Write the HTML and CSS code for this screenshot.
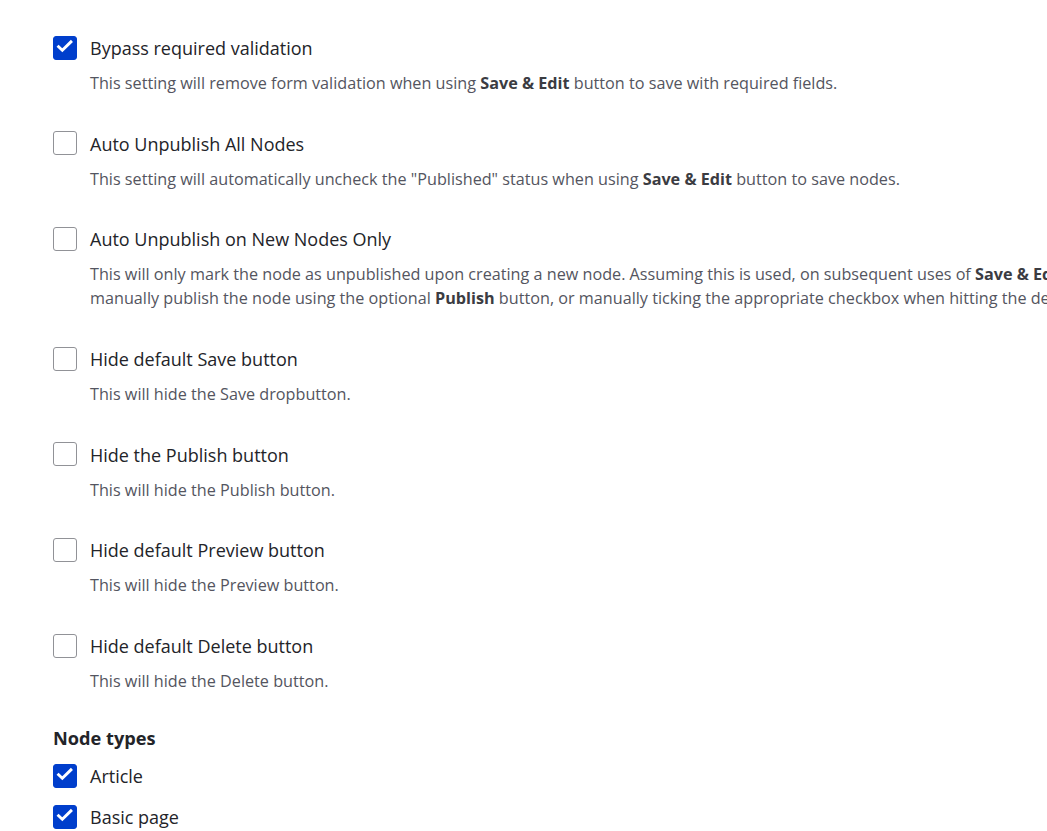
FILE: index.html
```html
<!DOCTYPE html>
<html lang="en">
<head>
<meta charset="utf-8">
<title>Save &amp; Edit settings</title>
<link rel="stylesheet" href="styles.css">
</head>
<body>
<div class="settings">
  <div class="item">
    <div class="check-row"><span class="box checked"><svg viewBox="0 0 24 24" class="tick"><polyline points="5.6,11.8 9.3,15.3 17.9,6.9"/></svg></span><span class="label">Bypass required validation</span></div>
    <div class="desc">This setting will remove form validation when using <b>Save &amp; Edit</b> button to save with required fields.</div>
  </div>
  <div class="item">
    <div class="check-row"><span class="box"></span><span class="label">Auto Unpublish All Nodes</span></div>
    <div class="desc">This setting will automatically uncheck the "Published" status when using <b>Save &amp; Edit</b> button to save nodes.</div>
  </div>
  <div class="item">
    <div class="check-row"><span class="box"></span><span class="label">Auto Unpublish on New Nodes Only</span></div>
    <div class="desc">This will only mark the node as unpublished upon creating a new node. Assuming this is used, on subsequent uses of <b>Save &amp; Edit</b>, you will need to<br>manually publish the node using the optional <b>Publish</b> button, or manually ticking the appropriate checkbox when hitting the default <b>Save</b> button.</div>
  </div>
  <div class="item">
    <div class="check-row"><span class="box"></span><span class="label">Hide default Save button</span></div>
    <div class="desc">This will hide the Save dropbutton.</div>
  </div>
  <div class="item">
    <div class="check-row"><span class="box"></span><span class="label">Hide the Publish button</span></div>
    <div class="desc">This will hide the Publish button.</div>
  </div>
  <div class="item">
    <div class="check-row"><span class="box"></span><span class="label">Hide default Preview button</span></div>
    <div class="desc">This will hide the Preview button.</div>
  </div>
  <div class="item">
    <div class="check-row"><span class="box"></span><span class="label">Hide default Delete button</span></div>
    <div class="desc">This will hide the Delete button.</div>
  </div>
</div>
<div class="node-types">
  <div class="heading">Node types</div>
  <div class="options">
    <div class="check-row"><span class="box checked"><svg viewBox="0 0 24 24" class="tick"><polyline points="5.6,11.8 9.3,15.3 17.9,6.9"/></svg></span><span class="label">Article</span></div>
    <div class="check-row"><span class="box checked"><svg viewBox="0 0 24 24" class="tick"><polyline points="5.6,11.8 9.3,15.3 17.9,6.9"/></svg></span><span class="label">Basic page</span></div>
  </div>
</div>
</body>
</html>
```
FILE: styles.css
```css
html, body {
  background: #ffffff;
}
body {
  margin: 0;
  padding: 35.5px 0 0 53px;
  overflow: hidden;
  font-family: "Open Sans", "Noto Sans", sans-serif;
  color: #232429;
}
.settings {
  display: flex;
  flex-direction: column;
  gap: 36.3px;
}
.check-row {
  display: flex;
  align-items: center;
  gap: 13px;
  height: 24px;
}
.box {
  flex: none;
  box-sizing: border-box;
  width: 24px;
  height: 24px;
  border: 1.3px solid #919297;
  border-radius: 3px;
  background: #fff;
  display: block;
}
.box.checked {
  background: #003ecc;
  border-color: #003ecc;
}
.tick {
  display: block;
  fill: none;
  stroke: #fff;
  stroke-width: 2.9;
  stroke-linecap: square;
  stroke-linejoin: miter;
  margin: -1.3px;
  width: 24px;
  height: 24px;
}
.label {
  font-size: 18px;
  line-height: 24px;
  padding-top: 1px;
  color: #232429;
}
.desc {
  margin: 11.4px 0 0 37px;
  font-size: 16.2px;
  line-height: 24px;
  color: #545560;
  white-space: nowrap;
}
.desc b {
  font-weight: 700;
  color: #3b3c42;
}
.node-types {
  margin-top: 33px;
}
.heading {
  font-size: 18.2px;
  font-weight: 700;
  line-height: 24px;
  color: #232429;
}
.options {
  margin-top: 13.5px;
  display: flex;
  flex-direction: column;
  gap: 17px;
}
```
